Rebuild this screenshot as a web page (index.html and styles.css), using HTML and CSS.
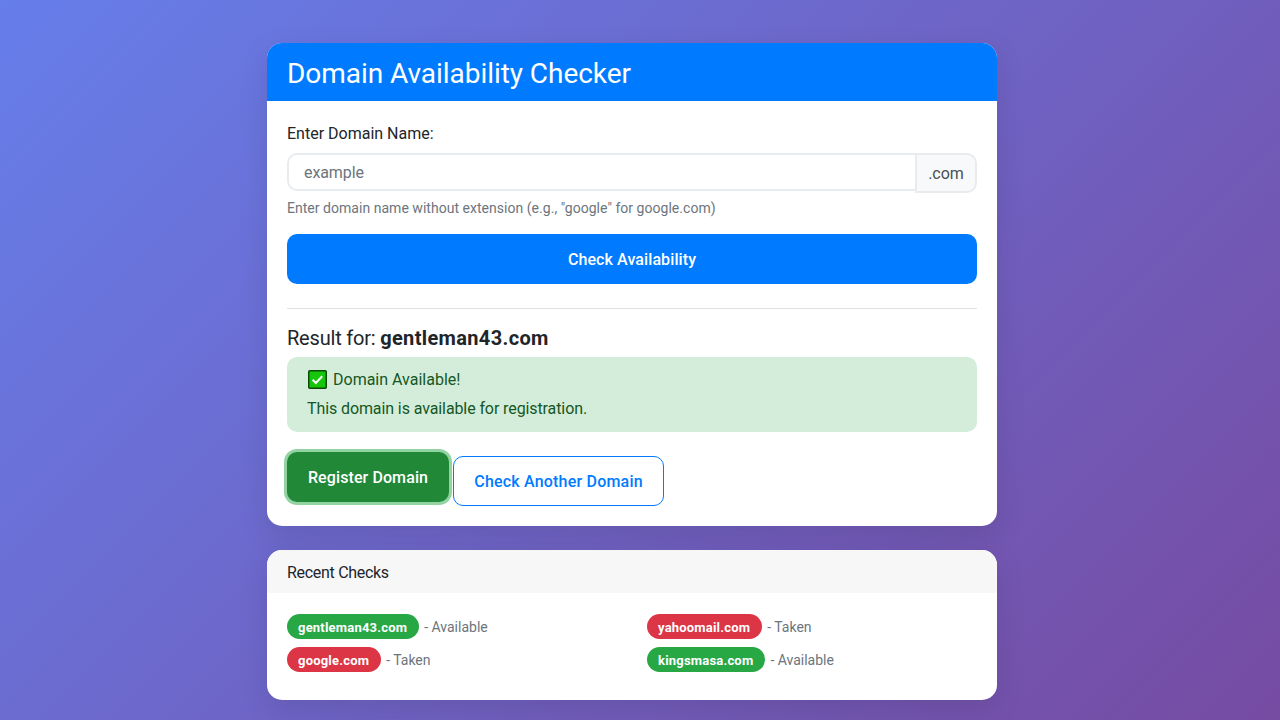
FILE: index.html
```html
<!DOCTYPE html>
<html lang="en">
<head>
    <meta charset="UTF-8">
    <meta name="viewport" content="width=device-width, initial-scale=1.0">
    <title>Domain Availability Checker</title>
    <link rel="stylesheet" href="styles.css">
</head>
<body>
    <div class="container">
        <div class="card main-card">
            <div class="card-header">
                <h1>Domain Availability Checker</h1>
            </div>
            <div class="card-body">
                <form class="check-form">
                    <label class="form-label" for="domain">Enter Domain Name:</label>
                    <div class="input-group">
                        <input class="form-control" id="domain" type="text" placeholder="example">
                        <span class="input-addon">.com</span>
                    </div>
                    <div class="form-text">Enter domain name without extension (e.g., "google" for google.com)</div>
                    <button class="btn btn-primary" type="button">Check Availability</button>
                </form>

                <hr class="divider">

                <h2 class="result-title">Result for: <strong>gentleman43.com</strong></h2>
                <div class="alert">
                    <p class="alert-head">
                        <svg class="check-icon" viewBox="0 0 19 19" width="19" height="19">
                            <rect x="0.75" y="0.75" width="17.5" height="17.5" rx="1" fill="#16c60c" stroke="#0b4a07" stroke-width="1.5"/>
                            <path d="M4.6 9.8l3.2 3.2 6.4-6.8" fill="none" stroke="#fff" stroke-width="2"/>
                        </svg>
                        Domain Available!
                    </p>
                    <p class="alert-text">This domain is available for registration.</p>
                </div>

                <div class="actions">
                    <button class="btn btn-success" type="button">Register Domain</button>
                    <button class="btn btn-outline" type="button">Check Another Domain</button>
                </div>
            </div>
        </div>

        <div class="card recent-card">
            <div class="recent-header">Recent Checks</div>
            <div class="recent-body">
                <div class="recent-item"><span class="badge green">gentleman43.com</span><span class="status">- Available</span></div>
                <div class="recent-item"><span class="badge red">yahoomail.com</span><span class="status">- Taken</span></div>
                <div class="recent-item"><span class="badge red">google.com</span><span class="status">- Taken</span></div>
                <div class="recent-item"><span class="badge green">kingsmasa.com</span><span class="status">- Available</span></div>
            </div>
        </div>
    </div>
</body>
</html>
```

FILE: styles.css
```css
* {
    box-sizing: border-box;
}

html, body {
    height: 720px;
    overflow: hidden;
}

body {
    margin: 0;
    padding-right: 16px;
    font-family: Roboto, "Noto Sans", sans-serif;
    font-size: 16px;
    color: #212529;
    background: linear-gradient(135deg, #667eea 0%, #764ba2 100%);
}

.container {
    width: 730px;
    margin: 0 auto;
    padding-top: 43px;
}

.card {
    background: white;
    border-radius: 15px;
    box-shadow: 0 10px 30px rgba(0,0,0,0.1);
    overflow: hidden;
}

.main-card {
    margin-bottom: 24px;
}

.card-header {
    background: #007bff;
    color: white;
    height: 58px;
    padding: 2px 20px 0;
    display: flex;
    align-items: center;
}

h1 {
    margin: 0;
    font-size: 28px;
    font-weight: 400;
    letter-spacing: -0.05px;
}

.card-body {
    padding: 20px;
}

.form-label {
    display: block;
    font-size: 16px;
    line-height: 26px;
    margin-bottom: 6px;
}

.input-group {
    display: flex;
    align-items: flex-start;
}

.form-control {
    flex: 1;
    height: 38px;
    border: 2px solid #e9ecef;
    border-right: none;
    border-radius: 10px 0 0 10px;
    padding: 0 15px;
    font: inherit;
    letter-spacing: -0.1px;
    outline: none;
}

.form-control::placeholder {
    color: #6c757d;
}

.input-addon {
    width: 62px;
    height: 40px;
    display: flex;
    align-items: center;
    justify-content: center;
    color: #495057;
    background: #f8f9fa;
    border: 2px solid #e9ecef;
    border-radius: 0 10px 10px 0;
}

.form-text {
    margin-top: 5px;
    font-size: 14px;
    line-height: 21px;
    letter-spacing: 0.03px;
    color: #6c757d;
}

.btn {
    font: inherit;
    font-weight: 500;
    letter-spacing: 0.1px;
    border-radius: 10px;
    height: 50px;
    padding: 0 20px;
    cursor: pointer;
}

.btn-primary {
    display: block;
    width: 100%;
    margin-top: 15px;
    color: white;
    background: #007bff;
    border: none;
}

.divider {
    margin: 24px 0 16px;
    border: none;
    border-top: 1px solid #dee2e6;
}

.result-title {
    margin: 0 0 6px;
    font-size: 20px;
    line-height: 26px;
    font-weight: 400;
    letter-spacing: -0.2px;
}

.result-title strong {
    font-weight: 700;
    letter-spacing: 0.35px;
}

.alert {
    background: #d4edda;
    color: #155724;
    border-radius: 10px;
    padding: 11px 20px 0;
    height: 75px;
    letter-spacing: -0.1px;
}

.alert p {
    margin: 0;
    line-height: 24px;
}

.alert .alert-head {
    display: flex;
    align-items: center;
    gap: 6px;
    padding-left: 1px;
    margin-bottom: 5px;
    letter-spacing: 0;
}

.check-icon {
    margin-bottom: 2px;
}

.actions {
    display: flex;
    align-items: flex-start;
    gap: 4px;
    margin-top: 20px;
}

.btn-success {
    width: 162px;
    padding: 0;
    color: white;
    background: #218838;
    border: none;
    box-shadow: 0 0 0 3px rgba(40,167,69,0.5);
}

.btn-outline {
    width: 211px;
    padding: 0;
    margin-top: 4px;
    color: #007bff;
    background: white;
    border: 1px solid #007bff;
    letter-spacing: 0.2px;
}

.recent-header {
    height: 43px;
    padding: 2px 20px 0;
    display: flex;
    align-items: center;
    background: #f7f7f7;
    letter-spacing: -0.3px;
}

.recent-body {
    padding: 21px 20px 28px;
    display: grid;
    grid-template-columns: 360px 1fr;
    row-gap: 8px;
}

.recent-item {
    display: flex;
    align-items: center;
    gap: 5px;
    font-size: 14px;
    color: #6c757d;
}

.badge {
    height: 25px;
    padding: 2px 12px 0 11px;
    border-radius: 13px;
    display: flex;
    align-items: center;
    color: white;
    font-size: 13px;
    font-weight: 700;
    letter-spacing: 0.2px;
}

.green {
    background: #28a745;
}

.red {
    background: #dc3545;
}
```
